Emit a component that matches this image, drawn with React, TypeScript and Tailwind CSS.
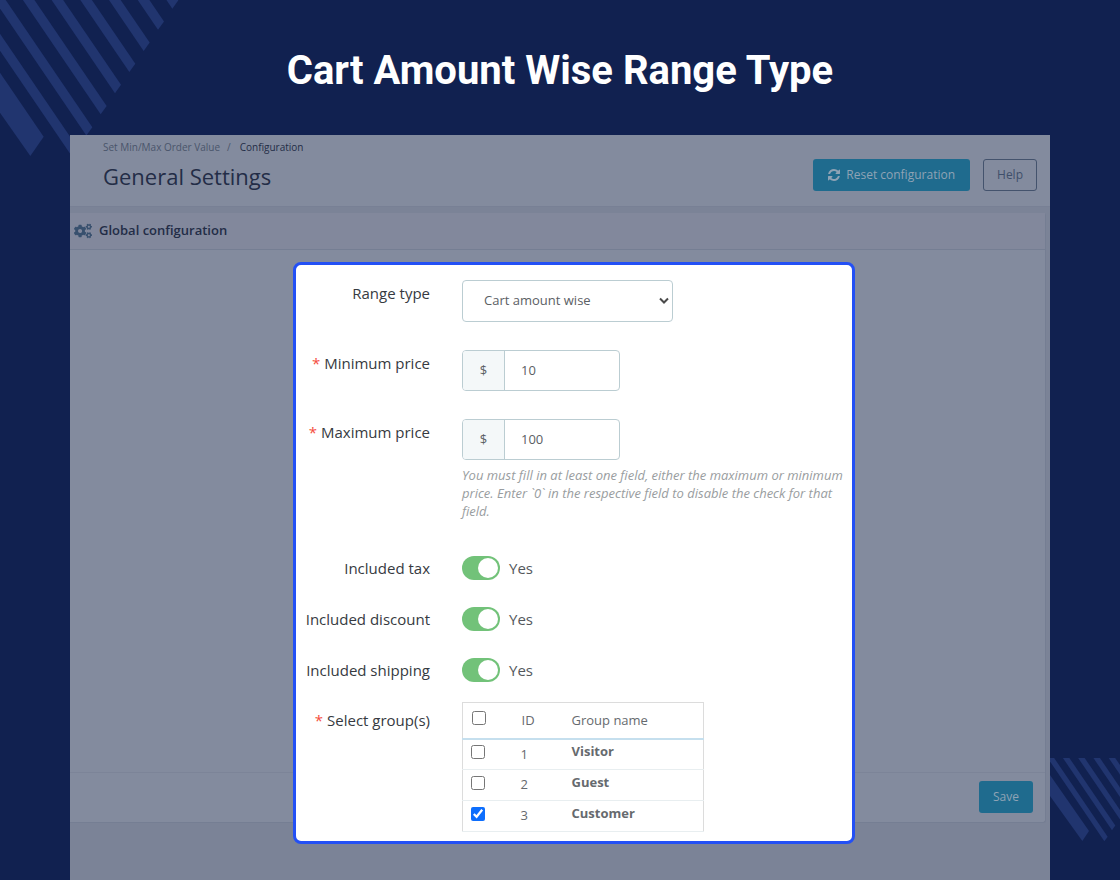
import { useState, type ReactNode } from "react";
import { FaCogs } from "react-icons/fa";

function TopStripes() {
  const steps = [0, 1, 2, 3, 4, 5, 6, 7];
  return (
    <svg className="absolute top-0 left-0 h-[160px] w-[180px]" viewBox="0 0 540 480" aria-hidden="true">
      <g fill="#21356f">
        {steps.map((k) => {
          const x = 535 - 43 * k;
          const y = 1 + 63.4 * k;
          return (
            <polygon
              key={k}
              points={`${x},${y} ${x - 18},${y + 25} ${x - 418},${y - 563} ${x - 400},${y - 587}`}
            />
          );
        })}
        <polygon points="131,410 91,468 0,338 0,218" />
      </g>
    </svg>
  );
}

function BottomStripes() {
  const steps = [0, 1, 2, 3, 4];
  return (
    <svg className="absolute top-[758px] right-0 h-[84px] w-[70px]" viewBox="0 0 210 252" aria-hidden="true">
      <g fill="#21356f">
        {steps.map((k) => {
          const x = 173 + 23 * k;
          const y = 236 - 33.5 * k;
          return (
            <polygon
              key={k}
              points={`${x},${y} ${x - 10},${y + 14} ${x - 210},${y - 280} ${x - 200},${y - 294}`}
            />
          );
        })}
        <polygon points="117,219 97,249 0,114 0,51" />
      </g>
    </svg>
  );
}

function RefreshIcon() {
  return (
    <svg className="size-3" viewBox="0 0 1536 1536" fill="currentColor" aria-hidden="true">
      <path d="M1511 928q0 5-1 7-64 268-268 434.500T764 1536q-146 0-282.500-55T238 1324l-129 129q-19 19-45 19t-45-19-19-45V960q0-26 19-45t45-19h448q26 0 45 19t19 45-19 45l-137 137q71 66 161 102t187 36q134 0 250-65t186-179q11-17 53-117 8-23 30-23h192q13 0 22.500 9.500t9.500 22.500zm25-800v448q0 26-19 45t-45 19h-448q-26 0-45-19t-19-45 19-45l138-138Q969 256 768 256q-134 0-250 65T332 500q-11 17-53 117-8 23-30 23H50q-13 0-22.500-9.500T18 608v-7q65-268 270-434.500T768 0q146 0 284 55.500T1297 212l130-129q19-19 45-19t45 19 19 45z" />
    </svg>
  );
}

function Label({ htmlFor, required, children }: { htmlFor: string; required?: boolean; children: ReactNode }) {
  return (
    <label htmlFor={htmlFor} className="w-[134px] shrink-0 text-right text-[15px] leading-[26px] whitespace-nowrap text-[#363a41]">
      {required && <span className="text-[#f54c3e]">* </span>}
      {children}
    </label>
  );
}

function PriceInput({ id, value }: { id: string; value: string }) {
  return (
    <div className="flex h-[41px] w-[158px] overflow-hidden rounded border border-[#bbcdd2]">
      <span className="flex w-[42px] shrink-0 items-center justify-center border-r border-[#bbcdd2] bg-[#f4f8f9] text-[13px] text-[#5b6064]">
        $
      </span>
      <input id={id} type="text" defaultValue={value} className="w-full min-w-0 px-4 text-[13px] text-[#5b6064] outline-none" />
    </div>
  );
}

function ToggleRow({ id, label }: { id: string; label: string }) {
  const [on, setOn] = useState(true);
  return (
    <div className="flex h-6 items-center gap-8">
      <Label htmlFor={id}>{label}</Label>
      <div className="flex items-center gap-[9px]">
        <button
          id={id}
          type="button"
          role="switch"
          aria-checked={on}
          onClick={() => setOn(!on)}
          className={
            on
              ? "flex h-6 w-[38px] items-center justify-end rounded-full bg-[#72c279] px-[2px]"
              : "flex h-6 w-[38px] items-center justify-start rounded-full bg-[#b3c7cd] px-[2px]"
          }
        >
          <span className="size-5 rounded-full bg-white" />
        </button>
        <span className="text-[15px] text-[#54585c]">{on ? "Yes" : "No"}</span>
      </div>
    </div>
  );
}

const groups = [
  { id: 1, name: "Visitor", checked: false },
  { id: 2, name: "Guest", checked: false },
  { id: 3, name: "Customer", checked: true },
];

function GroupTable() {
  return (
    <table className="w-[242px] table-fixed border-collapse border border-[#dcdcdc] text-left text-[13px] text-[#666a6e]">
      <thead>
        <tr className="h-9 border-b-2 border-[#c5dfee]">
          <th className="w-[50px] pb-1 pl-[9px]">
            <input id="groups" type="checkbox" aria-label="All groups" className="block size-[14px]" />
          </th>
          <th className="w-[59px] pl-[9px] font-normal">ID</th>
          <th className="font-normal">Group name</th>
        </tr>
      </thead>
      <tbody>
        {groups.map((g) => (
          <tr key={g.id} className="h-[31px] border-b border-[#e8eef0]">
            <td className="pb-1 pl-2">
              <input id={`group-${g.id}`} type="checkbox" defaultChecked={g.checked} className="block size-[14px] accent-[#0d6efd]" />
            </td>
            <td className="pl-2">{g.id}</td>
            <td className="pb-[5px] font-bold">
              <label htmlFor={`group-${g.id}`}>{g.name}</label>
            </td>
          </tr>
        ))}
      </tbody>
    </table>
  );
}

function SettingsForm() {
  return (
    <form className="absolute top-[127px] left-[223px] w-[562px] rounded-lg border-[3px] border-[#2350f5] bg-white pt-[15px] pb-[9px]">
      <div className="flex gap-8">
        <Label htmlFor="range">Range type</Label>
        <div className="relative h-[42px] w-[211px]">
          <select
            id="range"
            className="h-full w-full appearance-none rounded border border-[#bbcdd2] bg-white pl-[21px] text-[13px] text-[#5b6064]"
          >
            <option>Cart amount wise</option>
          </select>
          <svg className="pointer-events-none absolute top-[17px] right-1 h-2 w-[10px]" viewBox="0 0 10 8" fill="none" aria-hidden="true">
            <path d="M1 1.500 5 5.500 9 1.500" stroke="#4a4a4a" strokeWidth="2" />
          </svg>
        </div>
      </div>
      <div className="mt-7 flex gap-8">
        <Label htmlFor="min" required>Minimum price</Label>
        <PriceInput id="min" value="10" />
      </div>
      <div className="mt-7 flex gap-8">
        <Label htmlFor="max" required>Maximum price</Label>
        <div>
          <PriceInput id="max" value="100" />
          <p className="mt-[6px] text-[13px] leading-[18px] text-[#999da0] italic">
            You must fill in at least one field, either the maximum or minimum price. Enter `0` in the respective field
            to disable the check for that field.
          </p>
        </div>
      </div>
      <div className="mt-9 flex flex-col gap-[27px]">
        <ToggleRow id="tax" label="Included tax" />
        <ToggleRow id="discount" label="Included discount" />
        <ToggleRow id="shipping" label="Included shipping" />
      </div>
      <div className="mt-5 flex gap-8">
        <div className="flex pt-[5px]">
          <Label htmlFor="groups" required>Select group(s)</Label>
        </div>
        <GroupTable />
      </div>
    </form>
  );
}

export default function App() {
  return (
    <div className="relative flex min-h-screen flex-col overflow-hidden bg-[#112150] font-['Open_Sans',sans-serif]">
      <TopStripes />
      <BottomStripes />
      <h1 className="relative pt-[47px] pb-10 text-center font-['Roboto',sans-serif] text-[40px] leading-[48px] font-bold text-white">
        Cart Amount Wise Range Type
      </h1>
      <main className="relative mx-[70px] flex flex-1 flex-col bg-[#7b8397]">
        <header className="flex h-[72px] justify-between border-b border-[#788095] bg-[#838b9e] pr-[13px] pl-[33px]">
          <div>
            <nav className="flex pt-1 text-[10px] leading-4 text-[#4a556b]">
              <a href="#module">Set Min/Max Order Value</a>
              <span className="pr-[9px] pl-[7px]">/</span>
              <a href="#configuration" className="text-[#232d47]">Configuration</a>
            </nav>
            <h2 className="mt-[5px] text-[22px] leading-8 text-[#232d47]">General Settings</h2>
          </div>
          <div className="flex items-start gap-[13px] pt-6 text-[12px] font-medium">
            <button type="button" className="flex h-8 items-center gap-[6px] rounded-[3px] bg-[#1f6b8e] px-[15px] text-[#8fa3b5]">
              <RefreshIcon />
              Reset configuration
            </button>
            <button type="button" className="h-8 rounded-[3px] border border-[#44536d] px-[13px] text-[#3f4f6a]">
              Help
            </button>
          </div>
        </header>
        <section className="mt-[6px] mr-1 flex h-[610px] flex-col rounded-r-[3px] border-r border-b border-[#757e93] bg-[#838b9e]">
          <h3 className="flex h-[37px] shrink-0 items-center gap-[7px] border-b border-[#757e93] bg-[#82889c] pl-1 text-[13px] font-semibold text-[#232d47]">
            <FaCogs className="size-[18px] text-[#38506e]" />
            Global configuration
          </h3>
          <div className="flex-1" />
          <div className="flex h-[50px] justify-end border-t border-[#7c8498] pt-2 pr-3">
            <button type="button" className="h-8 rounded-[3px] bg-[#1f6b8e] px-[14px] text-[12px] font-medium text-[#8fa3b5]">
              Save
            </button>
          </div>
        </section>
        <SettingsForm />
      </main>
    </div>
  );
}
